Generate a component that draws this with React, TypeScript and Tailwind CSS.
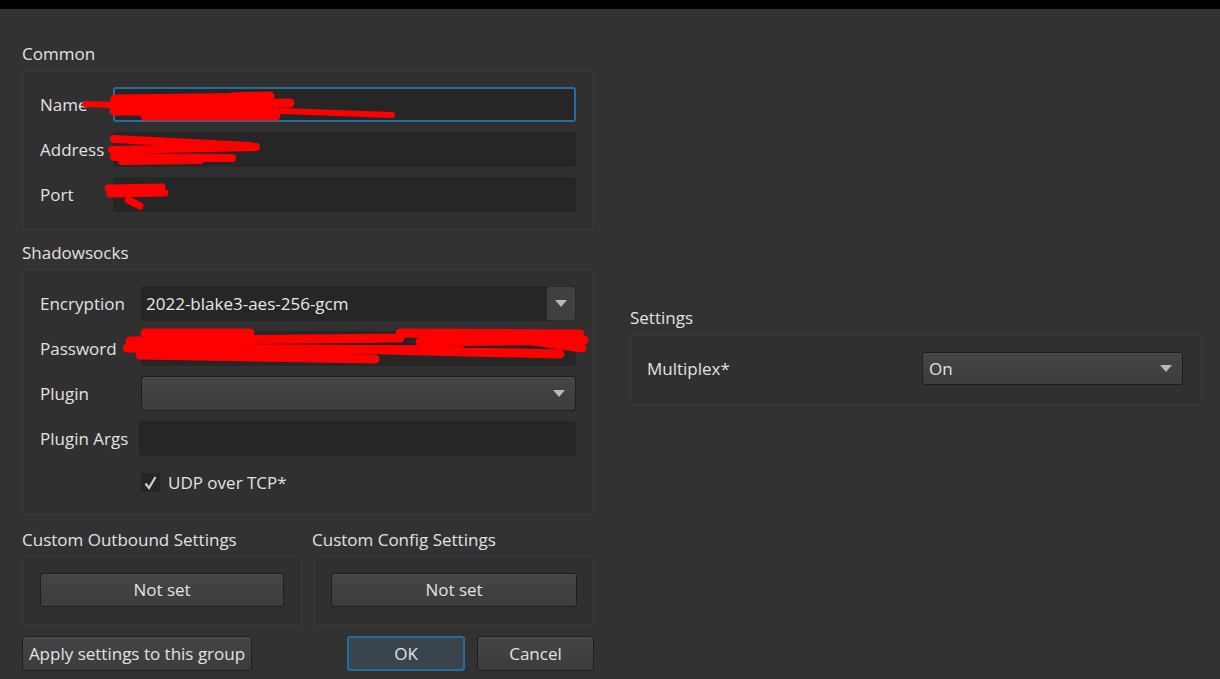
import { ReactNode } from 'react';

const inputCls = 'h-[35px] flex-1 rounded-[3px] bg-[#262626]';

function Caret() {
  return (
    <svg width="12" height="7" viewBox="0 0 12 7" className="shrink-0">
      <path d="M0 0 H12 L6 7 Z" fill="#b9b9b9" />
    </svg>
  );
}

function Group({ title, className = '', titleCls = '', children }: { title: string; className?: string; titleCls?: string; children: ReactNode }) {
  return (
    <div className={className}>
      <div className={`h-[20px] leading-[20px] mb-[6px] ${titleCls}`}>{title}</div>
      <div className="rounded-[3px] border border-[#3b3b3b] bg-[#303030]">{children}</div>
    </div>
  );
}

function Row({ label, w, children }: { label: string; w: string; children: ReactNode }) {
  return (
    <div className="flex items-center h-[35px]">
      <div className={`${w} shrink-0`}>{label}</div>
      {children}
    </div>
  );
}

function Btn({ children, className = '' }: { children: ReactNode; className?: string }) {
  return (
    <div className={`flex items-center rounded-[3px] border border-[#1e1e1e] bg-gradient-to-b from-[#454545] to-[#3c3c3c] shadow-[inset_0_1px_0_#4c4c4c] ${className}`}>
      {children}
    </div>
  );
}

export default function App() {
  return (
    <div className="relative w-[1220px] h-[679px] overflow-hidden bg-[#323232] text-[#e2e2e2] text-[17px] font-['Open_Sans',sans-serif]">
      <div className="h-[9px] bg-black" />
      <div className="flex pl-[22px] pt-[35px] gap-[36px]">
        {/* left column */}
        <div className="w-[572px] flex flex-col">
          <Group title="Common">
            <div className="flex flex-col gap-[10px] pt-[16px] pb-[17px] px-[17px]">
              <Row label="Name" w="w-[73px]">
                <div className={`${inputCls} border-2 border-[#246d9f]`} />
              </Row>
              <Row label="Address" w="w-[73px]">
                <div className={inputCls} />
              </Row>
              <Row label="Port" w="w-[73px]">
                <div className={inputCls} />
              </Row>
            </div>
          </Group>

          <Group title="Shadowsocks" className="mt-[13px]">
            <div className="flex flex-col gap-[10px] pt-[16px] pb-[22px] px-[17px]">
              <Row label="Encryption" w="w-[101px]">
                <div className={`${inputCls} flex items-stretch overflow-hidden`}>
                  <div className="flex-1 flex items-center pl-[5px] text-[#e8e8e8]">2022-blake3-aes-256-gcm</div>
                  <div className="w-[30px] flex items-center justify-center bg-[#404040] border border-[#2a2a2a] rounded-[3px]">
                    <Caret />
                  </div>
                </div>
              </Row>
              <Row label="Password" w="w-[101px]">
                <div className={inputCls} />
              </Row>
              <Row label="Plugin" w="w-[101px]">
                <Btn className="h-[35px] flex-1 justify-end pr-[10px]">
                  <Caret />
                </Btn>
              </Row>
              <Row label="Plugin Args" w="w-[99px]">
                <div className={inputCls} />
              </Row>
              <div className="flex items-center h-[19px] mt-[7px] pl-[101px] gap-[8px]">
                <div className="w-[19px] h-[19px] bg-[#262626] flex items-center justify-center">
                  <svg width="13" height="14" viewBox="0 0 13 14">
                    <path d="M1.5 7.5 L5 12 L11.5 1" stroke="#cfcfcf" strokeWidth="2.2" fill="none" />
                  </svg>
                </div>
                <span>UDP over TCP*</span>
              </div>
            </div>
          </Group>

          <div className="flex gap-[12px] mt-[15px]">
            <Group title="Custom Outbound Settings" className="flex-1">
              <div className="px-[17px] pt-[16px] pb-[18px]">
                <Btn className="h-[34px] justify-center">Not set</Btn>
              </div>
            </Group>
            <Group title="Custom Config Settings" className="flex-1" titleCls="-ml-[2px]">
              <div className="px-[16px] pt-[16px] pb-[18px]">
                <Btn className="h-[34px] justify-center">Not set</Btn>
              </div>
            </Group>
          </div>

          <div className="flex mt-[10px] gap-[12px]">
            <Btn className="h-[35px] w-[230px] justify-center">Apply settings to this group</Btn>
            <div className="flex-1" />
            <div className="h-[35px] w-[118px] flex items-center justify-center rounded-[3px] border-2 border-[#2b6a99] bg-[#3a444c]">OK</div>
            <Btn className="h-[35px] w-[117px] justify-center">Cancel</Btn>
          </div>
        </div>

        {/* right column */}
        <div className="w-[572px] pt-[264px]">
          <Group title="Settings">
            <div className="flex items-center justify-between pl-[16px] pr-[18px] pt-[17px] pb-[19px]">
              <span>Multiplex*</span>
              <Btn className="h-[33px] w-[261px] justify-between pl-[6px] pr-[10px]">
                <span>On</span>
                <Caret />
              </Btn>
            </div>
          </Group>
        </div>
      </div>

      {/* redaction scribbles */}
      <svg className="absolute inset-0 pointer-events-none" width="1220" height="679">
        <g stroke="#ff0000" strokeLinecap="round" fill="none">
          <path d="M85 104 L392 115" strokeWidth="6" />
          <path d="M115 99 L268 97 M112 105 L290 103 M114 111 L272 112 M145 116 L276 116 M232 97 L270 96" strokeWidth="9" />
          <path d="M114 139 L250 146 M112 150 L256 147 M114 157 L232 158 M122 161 L200 160" strokeWidth="8" />
          <path d="M108 188 L162 187 M110 194 L165 193 M128 200 L140 206" strokeWidth="7" />
          <path d="M145 333 L250 333 M130 341 L400 338 M127 348 L460 350 M140 355 L375 359 M400 333 L580 334 M420 342 L584 340 M380 350 L560 354 M505 337 L582 348" strokeWidth="9" />
        </g>
      </svg>
    </div>
  );
}
